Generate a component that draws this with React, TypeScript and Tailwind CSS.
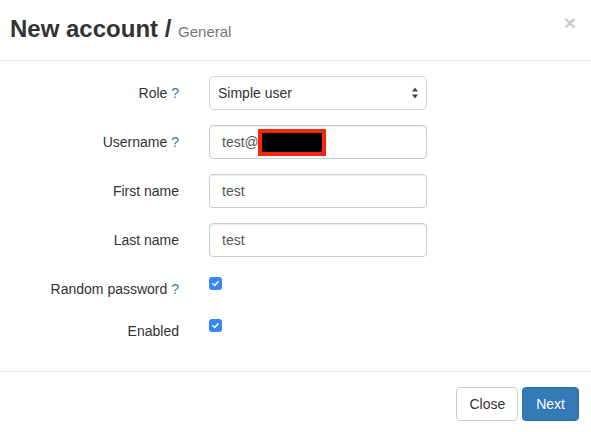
import type { ReactNode } from "react";

function HelpMark() {
	return <span className="text-[#337ab7]"> ?</span>;
}

function Row({ label, children }: { label: ReactNode; children: ReactNode }) {
	return (
		<div className="grid grid-cols-[179px_218px] gap-x-[30px]">
			<label className="whitespace-pre pt-[7px] text-right leading-[20px]">
				{label}
			</label>
			{children}
		</div>
	);
}

function CheckRow({ label }: { label: ReactNode }) {
	return (
		<div className="grid grid-cols-[179px_218px] gap-x-[30px]">
			<label className="whitespace-pre pt-[7px] text-right leading-[20px]">
				{label}
			</label>
			<div className="pt-[5px]">
				<span className="flex h-[13px] w-[13px] items-center justify-center rounded-[3px] bg-[#3b86f6]">
					<svg viewBox="0 0 12 12" className="h-[9px] w-[9px]">
						<path
							d="M2.5 6.3 L5 8.6 L9.6 3.4"
							fill="none"
							stroke="white"
							strokeWidth="1.9"
							strokeLinecap="round"
							strokeLinejoin="round"
						/>
					</svg>
				</span>
			</div>
		</div>
	);
}

function TextBox({ children }: { children: ReactNode }) {
	return (
		<div className="relative flex h-[34px] items-center rounded-[4px] border border-[#ccc] px-[12px] text-[#555] shadow-[inset_0_1px_1px_rgba(0,0,0,0.075)]">
			{children}
		</div>
	);
}

export default function App() {
	return (
		<div className="h-[432px] w-[591px] overflow-hidden bg-white font-['Liberation_Sans',Arial,sans-serif] text-[14px] text-[#333]">
			<div className="flex h-[61px] items-start border-b border-[#e5e5e5] pt-[14px] pr-[15px] pl-[10px]">
				<h4 className="text-[24px] font-bold leading-[30px]">
					New account /{" "}
					<small className="text-[15px] font-normal text-[#777]">General</small>
				</h4>
				<button
					type="button"
					className="mt-[-2px] ml-auto text-[21px] font-bold leading-[21px] text-black opacity-20"
				>
					×
				</button>
			</div>

			<div className="flex flex-col gap-[15px] pt-[15px] pb-[30px]">
				<Row
					label={
						<>
							Role
							<HelpMark />
						</>
					}
				>
					<div className="flex h-[34px] items-center justify-between rounded-[5px] border border-[#d4d4d4] pr-[7px] pl-[8px] text-[#333]">
						<span>Simple user</span>
						<svg viewBox="0 0 8 14" className="h-[14px] w-[8px]">
							<path d="M4 1.5 L7 5.5 L1 5.5 Z" fill="#444" />
							<path d="M4 12.5 L7 8.5 L1 8.5 Z" fill="#444" />
						</svg>
					</div>
				</Row>
				<Row
					label={
						<>
							Username
							<HelpMark />
						</>
					}
				>
					<TextBox>
						<span>test@</span>
						<span className="absolute top-[3px] left-[48px] h-[27px] w-[68px] border-[4px] border-[#f5260f] bg-black" />
					</TextBox>
				</Row>
				<Row label="First name">
					<TextBox>test</TextBox>
				</Row>
				<Row label="Last name">
					<TextBox>test</TextBox>
				</Row>
				<CheckRow
					label={
						<>
							Random password
							<HelpMark />
						</>
					}
				/>
				<CheckRow label="Enabled" />
			</div>

			<div className="flex justify-end gap-[4px] border-t border-[#e5e5e5] pt-[15px] pr-[12px]">
				<button
					type="button"
					className="h-[34px] rounded-[4px] border border-[#ccc] bg-white px-[12px] text-[#333]"
				>
					Close
				</button>
				<button
					type="button"
					className="h-[34px] rounded-[4px] border border-[#2e6da4] bg-[#337ab7] px-[13px] text-white"
				>
					Next
				</button>
			</div>
		</div>
	);
}
